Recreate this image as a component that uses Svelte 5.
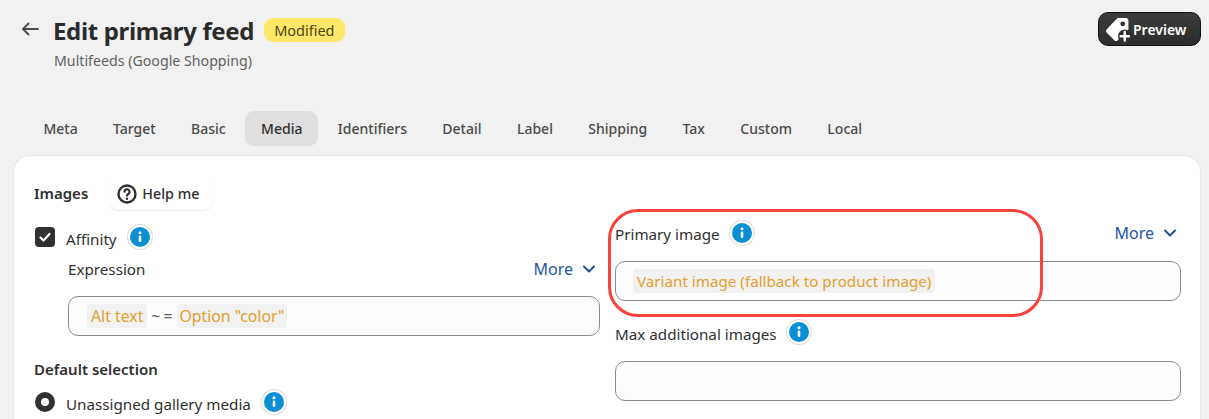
<script lang="ts">
  const tabs = ['Meta', 'Target', 'Basic', 'Media', 'Identifiers', 'Detail', 'Label', 'Shipping', 'Tax', 'Custom', 'Local'];
  const active = 'Media';
</script>

{#snippet info()}
  <span class="info">
    <svg viewBox="0 0 20 20" width="20" height="20" aria-hidden="true">
      <circle cx="10" cy="10" r="10" fill="#0a8ed4" />
      <circle cx="10" cy="5.8" r="1.5" fill="#fff" />
      <rect x="8.7" y="8.6" width="2.6" height="6.4" rx="1.2" fill="#fff" />
    </svg>
  </span>
{/snippet}

{#snippet more()}
  <button class="more">
    More
    <svg viewBox="0 0 14 10" width="14" height="10" aria-hidden="true">
      <path d="M2 2.5 7 7.5 12 2.5" fill="none" stroke="#1f5199" stroke-width="2" stroke-linecap="round" stroke-linejoin="round" />
    </svg>
  </button>
{/snippet}

<div class="page">
  <header class="top">
    <button class="back" aria-label="Back">
      <svg viewBox="0 0 18 14" width="18" height="14" aria-hidden="true">
        <path d="M16 7H1M6.500 1.500 1 7l5.500 5.500" fill="none" stroke="#4a4a4a" stroke-width="1.8" stroke-linecap="round" stroke-linejoin="round" />
      </svg>
    </button>
    <div class="titles">
      <div class="title-row">
        <h1>Edit primary feed</h1>
        <span class="badge">Modified</span>
      </div>
      <p class="sub">Multifeeds (Google Shopping)</p>
    </div>
    <button class="preview">
      <svg viewBox="0 0 26 26" width="27" height="27" aria-hidden="true">
        <path d="M13 2h8a2.500 2.500 0 0 1 2.500 2.500V13L13 23.500a2 2 0 0 1-2.800 0L2.500 15.800a2 2 0 0 1 0-2.800z" fill="#fff" />
        <circle cx="18" cy="7.500" r="2.300" fill="#303030" />
        <circle cx="20" cy="19.500" r="6.500" fill="#303030" />
        <path d="M20 15.500v8M16 19.500h8" stroke="#fff" stroke-width="2.400" stroke-linecap="round" />
      </svg>
      <span>Preview</span>
    </button>
  </header>

  <nav class="tabs">
    {#each tabs as tab}
      <button class="tab" class:active={tab === active}>{tab}</button>
    {/each}
  </nav>

  <section class="card">
    <div class="col left">
      <div class="heading-row">
        <h2>Images</h2>
        <button class="help">
          <svg viewBox="0 0 20 20" width="20" height="20" aria-hidden="true">
            <circle cx="10" cy="10" r="8.500" fill="none" stroke="#303030" stroke-width="2.400" />
            <path d="M7.500 7.800a2.500 2.500 0 1 1 3.700 2.200c-.8.500-1.200.9-1.200 1.700" fill="none" stroke="#303030" stroke-width="2.100" stroke-linecap="round" />
            <circle cx="10" cy="14.700" r="1.200" fill="#303030" />
          </svg>
          Help me
        </button>
      </div>

      <div class="option affinity">
        <span class="check">
          <svg viewBox="0 0 20 20" width="20" height="20" aria-hidden="true">
            <path d="M5.500 10.500 8.500 13.500 14.500 7" fill="none" stroke="#fff" stroke-width="2.200" stroke-linecap="round" stroke-linejoin="round" />
          </svg>
        </span>
        <span class="text">Affinity</span>
        {@render info()}
      </div>

      <div class="expr">
        <div class="field-head">
          <span>Expression</span>
          {@render more()}
        </div>
        <div class="input expression">
          <span class="token">Alt text</span>
          <span class="op">~=</span>
          <span class="token">Option "color"</span>
        </div>
      </div>

      <h2 class="default">Default selection</h2>
      <div class="option">
        <span class="radio"></span>
        <span class="text">Unassigned gallery media</span>
        {@render info()}
      </div>
    </div>

    <div class="col right">
      <div class="field-head primary">
        <span class="label"><span class="text small">Primary image</span> {@render info()}</span>
        {@render more()}
      </div>
      <div class="input">
        <span class="token">Variant image (fallback to product image)</span>
      </div>
      <div class="label max"><span class="text">Max additional images</span> {@render info()}</div>
      <div class="input"></div>
    </div>

    <div class="ring"></div>
  </section>
</div>

<style>
  :global(body) {
    margin: 0;
    background: #f1f1f1;
    overflow: hidden;
  }

  .page {
    height: 419px;
    overflow: hidden;
    font-family: "Noto Sans", "Open Sans", sans-serif;
    font-size: 15.2px;
    color: #303030;
    box-sizing: border-box;
  }

  button {
    font: inherit;
    color: inherit;
    border: 0;
    background: none;
    padding: 0;
  }

  h1, h2, p {
    margin: 0;
  }

  .top {
    display: flex;
    align-items: flex-start;
    height: 111px;
    padding: 12px 8px 0 22px;
    box-sizing: border-box;
  }

  .back {
    display: flex;
    width: 31px;
    padding-top: 10px;
  }

  .titles {
    flex: 1;
    padding-top: 4px;
  }

  .title-row {
    display: flex;
    align-items: center;
    gap: 10px;
    height: 28px;
  }

  h1 {
    font-size: 24px;
    font-weight: 700;
    letter-spacing: -0.35px;
    color: #2b2b2b;
  }

  .badge {
    background: #ffe769;
    color: #4d4514;
    border-radius: 9px;
    height: 24px;
    line-height: 24px;
    padding: 0 10px;
    font-size: 14.5px;
  }

  .sub {
    color: #616161;
    margin: 7px 0 0 1px;
    line-height: 20px;
    font-size: 14.2px;
  }

  .preview {
    display: flex;
    align-items: center;
    gap: 2px;
    width: 103px;
    height: 34px;
    box-sizing: border-box;
    padding-left: 5px;
    border-radius: 10px;
    background: linear-gradient(#3c3c3c, #2c2c2c);
    border: 1px solid #111;
    color: #fff;
    font-size: 14px;
    font-weight: 600;
  }

  .tabs {
    display: flex;
    gap: 3.4px;
    padding-left: 27.4px;
    height: 45px;
  }

  .tab {
    height: 35px;
    padding: 0 16px;
    border-radius: 9px;
    font-size: 14px;
    font-weight: 500;
    color: #4a4a4a;
  }

  .tab.active {
    background: #dfdfdf;
    color: #303030;
  }

  .card {
    position: relative;
    display: grid;
    grid-template-columns: 567px 566px;
    column-gap: 15px;
    margin: 0 9px 0 14px;
    padding: 21px 19px;
    height: 300px;
    box-sizing: border-box;
    background: #fff;
    border-radius: 16px;
    box-shadow: 0 0 0 1px #e8e8e8;
  }

  h2 {
    font-size: 15px;
    font-weight: 600;
    margin-left: 1px;
  }

  .heading-row {
    display: flex;
    align-items: center;
    gap: 20px;
    height: 33px;
  }

  .heading-row h2 {
    position: relative;
    top: -1px;
  }

  .help {
    display: flex;
    align-items: center;
    gap: 5px;
    height: 33px;
    padding: 0 14px 0 9px;
    border-radius: 10px;
    font-size: 14.3px;
    font-weight: 500;
    box-shadow: 0 1px 1px #ececec;
  }

  .option {
    display: flex;
    align-items: center;
    gap: 11px;
    padding-left: 2px;
    height: 24px;
  }

  .affinity {
    margin-top: 15px;
  }

  .text {
    position: relative;
    top: 2px;
  }

  .text.small {
    top: 1px;
  }

  .check {
    width: 20px;
    height: 20px;
    border-radius: 4px;
    background: #303030;
  }

  .radio {
    width: 20px;
    height: 20px;
    box-sizing: border-box;
    border-radius: 50%;
    border: 6.5px solid #303030;
  }

  .info {
    display: inline-flex;
    align-items: center;
    justify-content: center;
    width: 24px;
    height: 24px;
    box-sizing: border-box;
    border-radius: 50%;
    background: #fff;
    box-shadow: 0 0 0 1px #dcdcdc;
    vertical-align: middle;
  }

  .expr {
    padding-left: 35px;
    margin-top: 8px;
  }

  .field-head {
    display: flex;
    align-items: center;
    justify-content: space-between;
    height: 24px;
  }

  .more {
    display: flex;
    align-items: center;
    gap: 9px;
    padding-right: 4px;
    color: #22569f;
    font-size: 16px;
  }

  .input {
    display: flex;
    align-items: center;
    gap: 4px;
    height: 40px;
    box-sizing: border-box;
    padding: 0 17px;
    margin-top: 15px;
    border: 1px solid #8a8a8a;
    border-radius: 10px;
    background: #fdfdfd;
  }

  .expression {
    padding-left: 18px;
    font-size: 15.8px;
  }

  .token {
    background: #f1f1f1;
    color: #e3a02f;
    padding: 0 4px;
    line-height: 24px;
    border-radius: 4px;
  }

  .op {
    color: #616161;
    letter-spacing: 3px;
    margin-right: -2px;
  }

  .op + .token {
    padding: 0 2px;
  }

  .default {
    margin-top: 23px;
    margin-bottom: 11px;
  }

  .primary {
    padding-top: 44px;
  }

  .primary + .input {
    margin-top: 16px;
  }

  .label {
    display: inline-flex;
    align-items: center;
    gap: 10px;
  }

  .max {
    display: flex;
    margin-top: 19px;
  }

  .max + .input {
    margin-top: 17px;
  }

  .ring {
    position: absolute;
    left: 594px;
    top: 53px;
    width: 435px;
    height: 108px;
    box-sizing: border-box;
    border: 3px solid #f9423a;
    border-radius: 30px;
    pointer-events: none;
  }
</style>
